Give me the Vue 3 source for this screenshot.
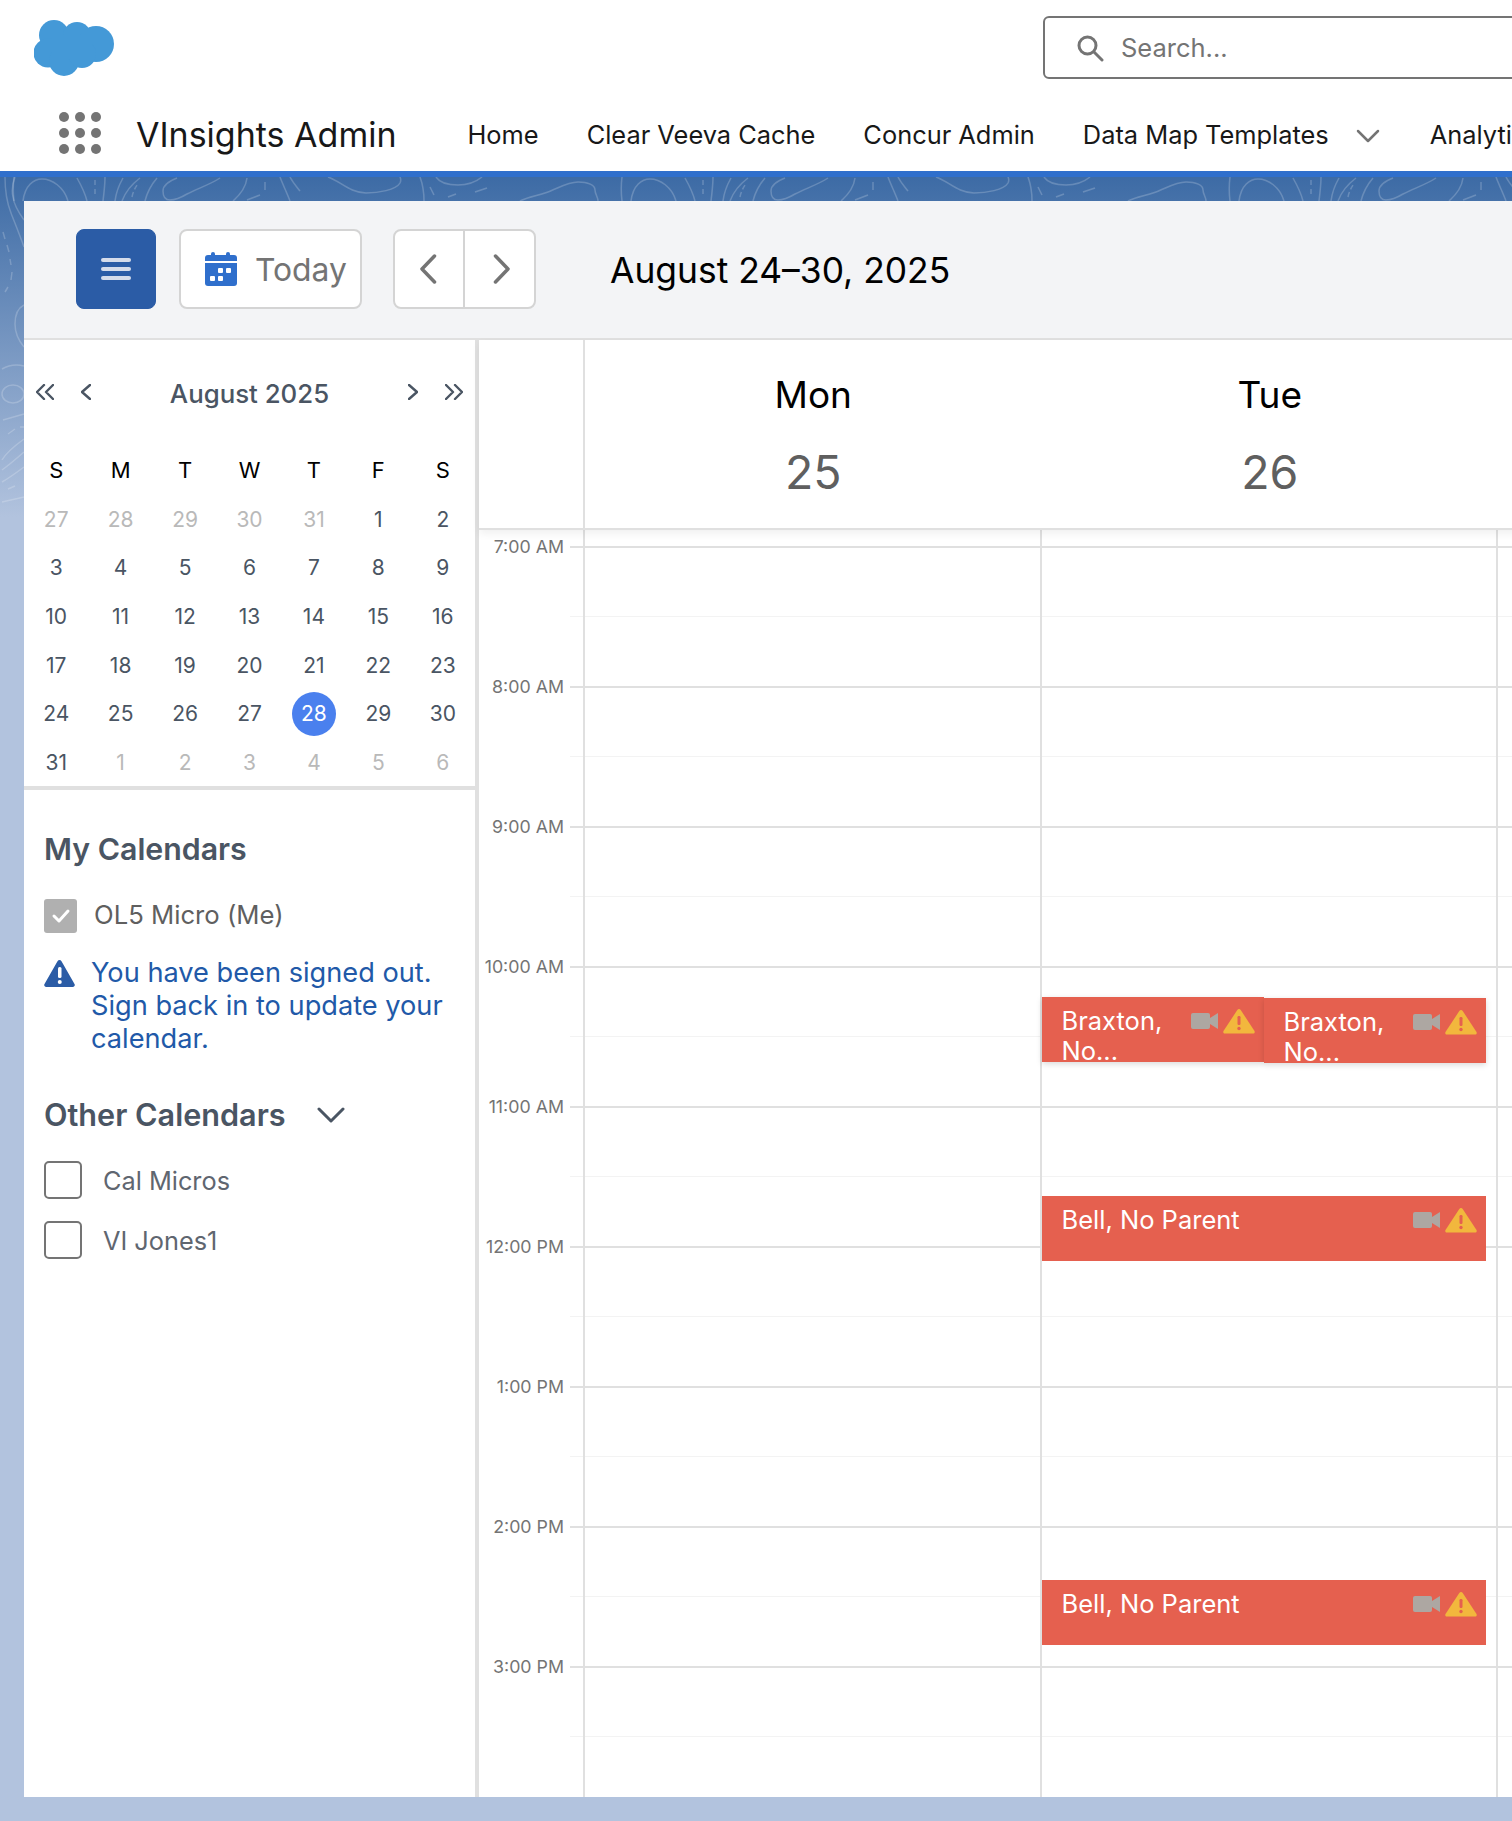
<script setup>
const navLinks = ["Home", "Clear Veeva Cache", "Concur Admin", "Data Map Templates"];
const weekdays = ["S", "M", "T", "W", "T", "F", "S"];

const monthCells = [
    ...[27, 28, 29, 30, 31].map((n) => ({ n, muted: true })),
    ...Array.from({ length: 31 }, (_, i) => ({ n: i + 1, today: i + 1 === 28 })),
    ...[1, 2, 3, 4, 5, 6].map((n) => ({ n, muted: true })),
];

const hours = ["7:00 AM", "8:00 AM", "9:00 AM", "10:00 AM", "11:00 AM", "12:00 PM", "1:00 PM", "2:00 PM", "3:00 PM"];

const days = [
    { name: "Mon", num: 25 },
    { name: "Tue", num: 26 },
    { name: "", num: "" },
];

// top and left are measured from the day column, everything is 65px tall
const events = [
    { id: 1, title: "Braxton, No...", top: 467, left: 0, width: 222, shadow: true },
    { id: 2, title: "Braxton, No...", top: 468, left: 222, width: 222, shadow: true },
    { id: 3, title: "Bell, No Parent", top: 666, left: 0, width: 444 },
    { id: 4, title: "Bell, No Parent", top: 1050, left: 0, width: 444 },
];
</script>

<template>
    <div class="page">
        <header class="site-header">
            <div class="top-row">
                <svg class="logo" width="80" height="58" viewBox="0 0 80 58">
                    <g fill="#4499d7">
                        <circle cx="20" cy="16" r="15" />
                        <circle cx="43" cy="17" r="14" />
                        <circle cx="62" cy="25" r="18" />
                        <circle cx="14" cy="34" r="14.5" />
                        <circle cx="30" cy="42" r="15" />
                        <circle cx="48" cy="35" r="14" />
                        <rect x="18" y="16" width="40" height="24" />
                    </g>
                </svg>
                <div class="search">
                    <svg width="28" height="28" viewBox="0 0 28 28" fill="none" stroke="#747474" stroke-width="3" stroke-linecap="round">
                        <circle cx="11.5" cy="11.5" r="8.5" />
                        <path d="M18 18l8 8" />
                    </svg>
                    <span>Search...</span>
                </div>
            </div>
            <div class="nav-row">
                <svg class="launcher" width="42" height="42" viewBox="0 0 42 42" fill="#747474">
                    <template v-for="y in [5, 21, 37]" :key="y">
                        <circle v-for="x in [5, 21, 37]" :key="x" :cx="x" :cy="y" r="5" />
                    </template>
                </svg>
                <span class="app-name">VInsights Admin</span>
                <nav class="nav-links">
                    <a v-for="link in navLinks" :key="link">{{ link }}</a>
                    <svg class="nav-chevron" width="24" height="14" viewBox="0 0 24 14" fill="none" stroke="#747474" stroke-width="2.5" stroke-linecap="round" stroke-linejoin="round">
                        <path d="M2 2l10 10L22 2" />
                    </svg>
                    <a class="nav-cut">Analytics</a>
                </nav>
            </div>
        </header>

        <div class="backdrop">
            <svg class="contours" width="1512" height="400" viewBox="0 0 1512 400" fill="none" stroke="#fff" stroke-opacity="0.2" stroke-width="1.5">
                <defs>
                    <pattern id="topo" width="608" height="24" patternUnits="userSpaceOnUse">
                        <path d="M23 24C25 8 34 2 42 2c10 0 22 8 26 22" />
                        <path d="M14 0c-1 8-1 16 0 24" />
                        <path d="M77 1c4 7 8 15 10 23" />
                        <path d="M95 3v16" stroke-dasharray="5 4" />
                        <path d="M105 0c0 8-1 16-2 24" />
                        <path d="M115 24c1-8 4-16 8-23" />
                        <path d="M122 24c3-8 10-17 18-23" />
                        <path d="M132 20c1-5 3-9 5-12" stroke-dasharray="5 3" />
                        <path d="M145 24c2-8 6-16 12-23" />
                        <path d="M177 1c-8 3-14 7-14 13 0 6 3 9 7 9 6 0 12-3 17-6 12-6 24-10 33-16" />
                        <path d="M247 1c-1 8-6 16-14 23" />
                        <path d="M265 5v8" />
                        <path d="M260 18l-13 5" />
                        <path d="M280 0c3 8 7 16 10 24" />
                        <path d="M290 0c3 6 7 10 10 14" />
                        <path d="M328 0c12 4 22 16 38 16 12 0 30-3 34-10 1-2 1-4 0-6" />
                        <path d="M420 0c3 8 4 16 4 24" />
                        <path d="M436 0c4 6 12 8 22 8s18-3 24-8" />
                        <path d="M430 10l4 8M448 20l8-3M487 11l-12 4" />
                        <path d="M520 24c8-4 16-5 25-8 12-4 22-11 33-11 10 0 17 3 17 8 0 4 3 7 3 11" />
                    </pattern>
                </defs>
                <rect width="1512" height="24" fill="url(#topo)" stroke="none" />
                <path d="M5 0c0 14 2 26 6 36 3 8 8 20 13 34" />
                <path d="M15 0c-3 8-3 16-2 20 1 8 6 16 11 23" />
                <path d="M3 55l2 7M7 68l2 7M10 82l1 6M12 95l-1 8M8 110l-3 5" />
                <path d="M24 128c-6 3-9 10-9 19 0 9 4 17 9 23" />
                <path d="M2 192c7-4 14-5 22-3" />
                <ellipse cx="13" cy="217" rx="11" ry="9" />
                <path d="M3 243l21-6M8 257l7-5M20 250h4" />
                <path d="M2 283c4-7 11-13 22-21" />
                <path d="M2 293c7-5 14-11 22-18" />
                <path d="M2 305c7-4 14-9 22-15" />
                <path d="M8 312l7-3M2 325l22-5" />
            </svg>

            <main class="panel">
                <div class="toolbar">
                    <button class="tool-btn menu-btn">
                        <svg width="30" height="24" viewBox="0 0 30 24" fill="#d5dceb">
                            <rect y="1" width="30" height="4" rx="2" />
                            <rect y="10" width="30" height="4" rx="2" />
                            <rect y="19" width="30" height="4" rx="2" />
                        </svg>
                    </button>
                    <button class="tool-btn today-btn">
                        <svg width="32" height="34" viewBox="0 0 32 34" fill="#2f6fcc">
                            <rect x="6" y="0" width="4" height="6" rx="2" />
                            <rect x="21" y="0" width="4" height="6" rx="2" />
                            <path d="M3 3h26a3 3 0 0 1 3 3v3H0V6a3 3 0 0 1 3-3z" />
                            <path d="M0 11h32v20a3 3 0 0 1-3 3H3a3 3 0 0 1-3-3z" />
                            <g fill="#fff">
                                <rect x="13" y="16" width="5" height="5" rx="1" />
                                <rect x="21" y="16" width="5" height="5" rx="1" />
                                <rect x="5" y="24" width="5" height="5" rx="1" />
                                <rect x="13" y="24" width="5" height="5" rx="1" />
                            </g>
                        </svg>
                        <span>Today</span>
                    </button>
                    <div class="step-group">
                        <button class="step-btn step-prev">
                            <svg width="18" height="32" viewBox="0 0 18 32" fill="none" stroke="#747474" stroke-width="3.5" stroke-linecap="round" stroke-linejoin="round">
                                <path d="M15.500 3L3 16l12.500 13" />
                            </svg>
                        </button>
                        <button class="step-btn step-next">
                            <svg width="18" height="32" viewBox="0 0 18 32" fill="none" stroke="#747474" stroke-width="3.5" stroke-linecap="round" stroke-linejoin="round">
                                <path d="M2.500 3L15 16 2.500 29" />
                            </svg>
                        </button>
                    </div>
                    <h1 class="range-title">August 24–30, 2025</h1>
                </div>

                <div class="workspace">
                    <aside class="sidebar">
                        <div class="mini-cal">
                            <div class="mini-head">
                                <svg width="18" height="16" viewBox="0 0 18 16" class="mini-arrow" style="margin-left: 12px">
                                    <path d="M8 1L1 8l7 7M17 1l-7 7 7 7" />
                                </svg>
                                <svg width="10" height="16" viewBox="0 0 10 16" class="mini-arrow" style="margin-left: 27px">
                                    <path d="M9 1L1 8l8 7" />
                                </svg>
                                <span class="mini-title">August 2025</span>
                                <svg width="10" height="16" viewBox="0 0 10 16" class="mini-arrow">
                                    <path d="M1 1l8 7-8 7" />
                                </svg>
                                <svg width="18" height="16" viewBox="0 0 18 16" class="mini-arrow" style="margin-left: 27px; margin-right: 12px">
                                    <path d="M1 1l7 7-7 7M10 1l7 7-7 7" />
                                </svg>
                            </div>
                            <div class="mini-grid">
                                <div v-for="(d, i) in weekdays" :key="i" class="mini-cell mini-weekday">{{ d }}</div>
                                <div v-for="(c, i) in monthCells" :key="'c' + i" :class="['mini-cell', { 'is-muted': c.muted }]">
                                    <span :class="{ 'today-dot': c.today }">{{ c.n }}</span>
                                </div>
                            </div>
                        </div>

                        <div class="calendars">
                            <h2 class="cal-heading my-heading">My Calendars</h2>
                            <div class="cal-row my-row">
                                <span class="check-on">
                                    <svg width="20" height="16" viewBox="0 0 20 16" fill="none" stroke="#fff" stroke-width="3" stroke-linecap="round" stroke-linejoin="round">
                                        <path d="M3 8l5 5L17 3" />
                                    </svg>
                                </span>
                                <span class="my-label">OL5 Micro (Me)</span>
                            </div>
                            <div class="signed-out">
                                <svg width="31" height="28" viewBox="0 0 31 28">
                                    <path d="M15.5 1c.8 0 1.500.4 2 1.200l13 22.800c.8 1.400-.1 3-1.700 3H2.200C.6 28-.3 26.400.5 25l13-22.800c.5-.8 1.200-1.200 2-1.200z" fill="#2b5ca6" />
                                    <rect x="14" y="8" width="3.500" height="11" rx="1.500" fill="#fff" />
                                    <circle cx="15.750" cy="23" r="2" fill="#fff" />
                                </svg>
                                <p>You have been signed out. Sign back in to update your calendar.</p>
                            </div>
                            <div class="other-head">
                                <h2 class="cal-heading">Other Calendars</h2>
                                <svg width="28" height="16" viewBox="0 0 28 16" fill="none" stroke="#4a5563" stroke-width="3" stroke-linecap="round" stroke-linejoin="round">
                                    <path d="M2 2l12 12L26 2" />
                                </svg>
                            </div>
                            <div class="other-list">
                                <label class="other-row"><span class="check-off"></span><span class="other-label">Cal Micros</span></label>
                                <label class="other-row"><span class="check-off"></span><span class="other-label">VI Jones1</span></label>
                            </div>
                        </div>
                    </aside>

                    <section class="week">
                        <div class="week-head">
                            <div class="gutter"></div>
                            <div v-for="(d, i) in days" :key="i" class="day-head">
                                <div class="day-name">{{ d.name }}</div>
                                <div class="day-num">{{ d.num }}</div>
                            </div>
                        </div>
                        <div class="week-body">
                            <div v-for="h in hours" :key="h" class="hour">
                                <span class="hour-label">{{ h }}</span>
                            </div>
                            <div class="columns">
                                <div class="gutter-blank"></div>
                                <div class="day-col"></div>
                                <div class="day-col">
                                    <div
                                        v-for="e in events"
                                        :key="e.id"
                                        :class="['event', { 'event--shadow': e.shadow }]"
                                        :style="{ top: e.top + 'px', left: e.left + 'px', width: e.width + 'px' }"
                                    >
                                        <span class="event-title">{{ e.title }}</span>
                                        <svg class="event-icons" width="64" height="26" viewBox="0 0 64 26">
                                            <rect x="0" y="5" width="19" height="16" rx="2" fill="#ada7a2" />
                                            <path d="M19 10l8-5v16l-8-5z" fill="#ada7a2" />
                                            <path d="M48 1c.7 0 1.300.4 1.700 1l13.800 21c.6 1.200-.1 2.500-1.500 2.500H34c-1.400 0-2.100-1.300-1.500-2.500l13.800-21c.4-.6 1-1 1.700-1z" fill="#f2b73d" />
                                            <rect x="46.500" y="8" width="3" height="9" rx="1.200" fill="#e5604f" />
                                            <circle cx="48" cy="20.500" r="1.700" fill="#e5604f" />
                                        </svg>
                                    </div>
                                </div>
                                <div class="day-col"></div>
                            </div>
                        </div>
                    </section>
                </div>
            </main>
        </div>
    </div>
</template>

<style>
html,
body {
    margin: 0;
    overflow: hidden;
}
</style>

<style scoped>
.page {
    width: 1512px;
    height: 1821px;
    overflow: hidden;
    display: flex;
    flex-direction: column;
    font-family: Inter, "Liberation Sans", sans-serif;
    background: #fff;
}

.site-header {
    flex: none;
    height: 177px;
    box-sizing: border-box;
    border-bottom: 6px solid #2f6fcc;
}

.top-row {
    height: 94px;
    padding: 16px 0 0 34px;
    box-sizing: border-box;
    display: flex;
    align-items: flex-start;
}

.logo {
    flex: none;
    margin-top: 3px;
}

.search {
    flex: none;
    width: 620px;
    height: 63px;
    margin-left: 929px;
    box-sizing: border-box;
    border: 2px solid #747474;
    border-radius: 6px;
    padding-left: 31px;
    display: flex;
    align-items: center;
    gap: 17px;
    font-size: 25.5px;
    color: #747474;
}

.nav-row {
    height: 77px;
    padding-left: 59px;
    padding-top: 3px;
    box-sizing: border-box;
    display: flex;
    align-items: center;
    white-space: nowrap;
}

.launcher {
    flex: none;
    margin-top: -3px;
}

.app-name {
    margin-left: 35px;
    font-size: 34px;
    color: #181818;
}

.nav-links {
    margin-left: 71px;
    display: flex;
    align-items: center;
    gap: 48px;
    font-size: 25.4px;
    color: #181818;
}

.nav-chevron {
    flex: none;
    margin-left: -21px;
    margin-top: 3px;
}

.nav-cut {
    margin-left: 2px;
}

.backdrop {
    flex: 1;
    position: relative;
    min-height: 0;
    padding: 24px 0 24px 24px;
    box-sizing: border-box;
    background: linear-gradient(180deg, #3d6ba5 0, #b2c3de 340px);
}

.contours {
    position: absolute;
    top: 0;
    left: 0;
}

.panel {
    position: relative;
    width: 1600px;
    height: 100%;
    display: flex;
    flex-direction: column;
    background: #fff;
}

.toolbar {
    flex: none;
    height: 139px;
    box-sizing: border-box;
    padding-left: 52px;
    padding-bottom: 1px;
    border-bottom: 2px solid #e0e0e0;
    background: #f3f4f6;
    display: flex;
    align-items: center;
}

.tool-btn {
    height: 80px;
    box-sizing: border-box;
    border-radius: 8px;
    display: flex;
    align-items: center;
    font-family: inherit;
    padding: 0;
}

.menu-btn {
    width: 80px;
    justify-content: center;
    border: 1px solid #2b5ca6;
    background: #2b5ca6;
}

.today-btn {
    width: 183px;
    margin-left: 23px;
    padding-left: 24px;
    gap: 18px;
    border: 2px solid #d4d4d4;
    background: #fff;
    font-size: 31.8px;
    color: #747474;
}

.step-group {
    width: 143px;
    height: 80px;
    margin-left: 31px;
    box-sizing: border-box;
    border: 2px solid #d4d4d4;
    border-radius: 8px;
    background: #fff;
    display: flex;
}

.step-btn {
    flex: none;
    width: 68px;
    border: 0;
    padding: 0;
    background: none;
    display: flex;
    align-items: center;
    justify-content: center;
}

.step-prev {
    padding-right: 2px;
}

.step-next {
    flex: 1;
    padding-left: 4px;
    border-left: 2px solid #d4d4d4;
}

.range-title {
    margin: 0 0 0 74px;
    padding-top: 2px;
    font-size: 35.4px;
    font-weight: 400;
    color: #000;
    white-space: nowrap;
}

.workspace {
    flex: 1;
    min-height: 0;
    display: flex;
}

.sidebar {
    flex: none;
    width: 455px;
    box-sizing: border-box;
    border-right: 4px solid #e0e0e0;
}

.mini-cal {
    border-bottom: 4px solid #e0e0e0;
}

.mini-head {
    height: 106px;
    display: flex;
    align-items: center;
}

.mini-arrow {
    flex: none;
    fill: none;
    stroke: #4a5563;
    stroke-width: 2.4;
    stroke-linecap: round;
    stroke-linejoin: round;
    margin-top: -2px;
}

.mini-title {
    flex: 1;
    padding-top: 1px;
    text-align: center;
    font-size: 25.8px;
    font-weight: 500;
    color: #4a5563;
}

.mini-grid {
    display: grid;
    grid-template-columns: repeat(7, 1fr);
    grid-auto-rows: 48.57px;
}

.mini-cell {
    display: flex;
    align-items: center;
    justify-content: center;
    padding-top: 1px;
    box-sizing: border-box;
    font-size: 21px;
    color: #4a5563;
}

.mini-weekday {
    padding-top: 0;
    font-size: 22px;
    font-weight: 400;
    color: #000;
}

.is-muted {
    color: #b9b9b9;
}

.today-dot {
    width: 44px;
    height: 44px;
    border-radius: 50%;
    background: #4a80ee;
    color: #fff;
    display: flex;
    align-items: center;
    justify-content: center;
}

.calendars {
    padding: 39px 20px 0;
}

.cal-heading {
    margin: 0;
    font-size: 30.6px;
    line-height: 40px;
    font-weight: 600;
    color: #4a5563;
}

.my-heading {
    font-size: 30.3px;
}

.cal-row {
    display: flex;
    align-items: center;
}

.my-row {
    margin-top: 30px;
    height: 34px;
}

.check-on {
    flex: none;
    width: 33px;
    height: 34px;
    border-radius: 3px;
    background: #b0b0b0;
    display: flex;
    align-items: center;
    justify-content: center;
}

.my-label {
    margin-left: 17px;
    margin-top: -3px;
    font-size: 25.7px;
    color: #5f5f5f;
}

.signed-out {
    margin-top: 23px;
    display: flex;
    align-items: flex-start;
    gap: 16px;
}

.signed-out svg {
    flex: none;
    margin-top: 3px;
}

.signed-out p {
    margin: 0;
    font-size: 27.2px;
    line-height: 33px;
    color: #2159a8;
}

.other-head {
    margin-top: 40px;
    display: flex;
    align-items: center;
    gap: 31px;
}

.other-list {
    margin-top: 26px;
    display: flex;
    flex-direction: column;
    gap: 22px;
}

.other-row {
    display: flex;
    align-items: center;
    gap: 21px;
    font-size: 25.3px;
    color: #5f6670;
}

.other-label {
    padding-top: 2px;
}

.check-off {
    flex: none;
    width: 38px;
    height: 38px;
    box-sizing: border-box;
    border: 2px solid #747474;
    border-radius: 5px;
}

.week {
    flex: 1;
    min-width: 0;
    display: flex;
    flex-direction: column;
}

.week-head {
    flex: none;
    position: relative;
    z-index: 2;
    height: 190px;
    box-sizing: border-box;
    border-bottom: 2px solid #e0e0e0;
    box-shadow: 0 4px 8px rgba(0, 0, 0, 0.06);
    display: flex;
}

.gutter {
    flex: none;
    width: 106px;
    box-sizing: border-box;
    border-right: 2px solid #e0e0e0;
}

.day-head {
    flex: none;
    width: 456.5px;
    padding-top: 32px;
    box-sizing: border-box;
    text-align: center;
}

.day-name {
    font-size: 37px;
    line-height: 46px;
    color: #000;
}

.day-num {
    margin-top: 25px;
    font-size: 46.5px;
    line-height: 58px;
    color: #5f5f5f;
}

.week-body {
    flex: 1;
    min-height: 0;
    position: relative;
    overflow: hidden;
    padding-top: 16px;
}

.hour {
    height: 140px;
    margin-left: 91px;
    box-sizing: border-box;
    border-top: 2px solid #e0e0e0;
    position: relative;
}

.hour::after {
    content: "";
    position: absolute;
    left: 0;
    right: 0;
    top: 68px;
    height: 1px;
    background: #f3f3f3;
}

.hour-label {
    position: absolute;
    right: 100%;
    top: -2px;
    margin-right: 6px;
    transform: translateY(-50%);
    font-size: 17.8px;
    color: #747474;
    white-space: nowrap;
}

.columns {
    position: absolute;
    inset: 0;
    display: flex;
}

.gutter-blank {
    flex: none;
    width: 104px;
}

.day-col {
    flex: none;
    width: 456.5px;
    box-sizing: border-box;
    border-left: 2px solid #e0e0e0;
    position: relative;
}

.event {
    position: absolute;
    height: 65px;
    box-sizing: border-box;
    padding: 9px 9px 0 20px;
    background: #e5604f;
    overflow: hidden;
    display: flex;
    align-items: flex-start;
    justify-content: space-between;
}

.event--shadow {
    box-shadow: 0 2px 6px rgba(0, 0, 0, 0.15);
}

.event-title {
    flex: 1;
    min-width: 0;
    font-size: 25.5px;
    line-height: 30px;
    color: #fff;
}

.event-icons {
    flex: none;
    margin-top: 2px;
}
</style>
